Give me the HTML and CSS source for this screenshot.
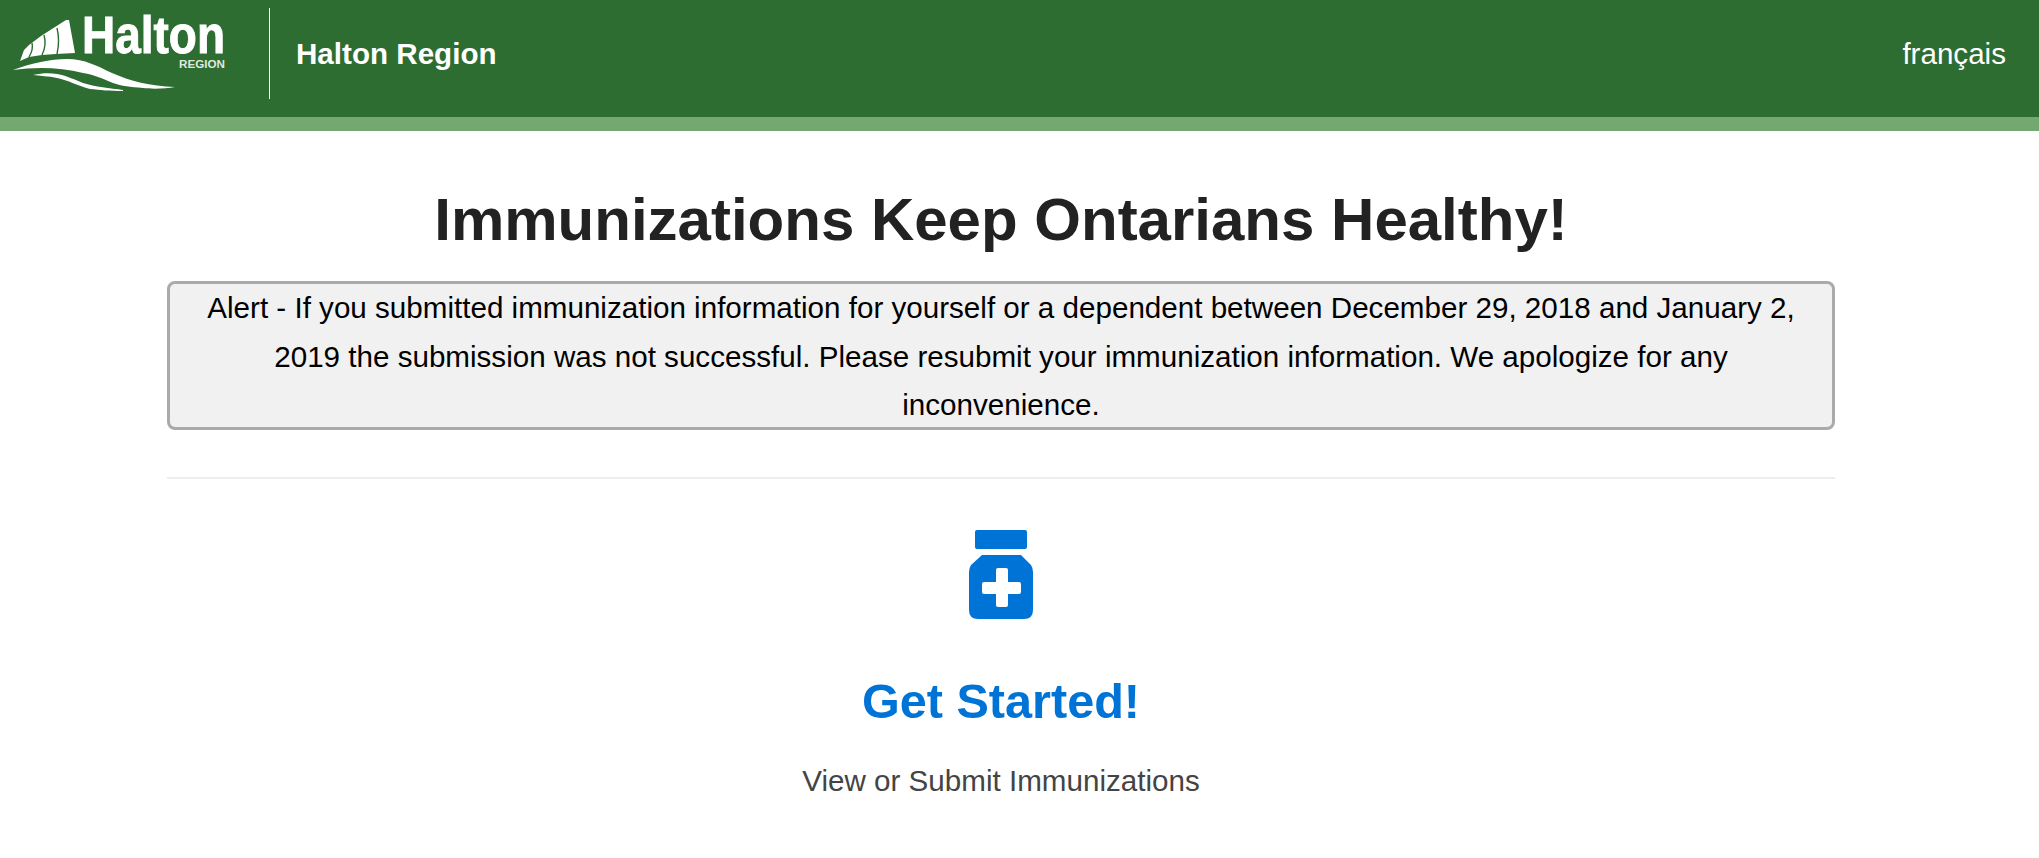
FILE: index.html
```html
<!DOCTYPE html>
<html lang="en">
<head>
<meta charset="utf-8">
<title>Immunizations Keep Ontarians Healthy!</title>
<link rel="stylesheet" href="styles.css">
</head>
<body>
<header class="site-header">
  <div class="brand">
    <svg class="logo" width="240" height="100" viewBox="0 0 240 100" role="img" aria-label="Halton Region">
      <path class="logo-fill" d="M66 20 L69 20 L75 53 L56 54 L42 55 L29 57 L20 61 L24 50 L29 45 L41 36 L55 27 Z"/>
      <path class="logo-slit" d="M57 28 C59 36 59 45 57 54 M44 35 C46 42 45 49 42 55 M32 43 C33 47 32 52 29 57"/>
      <path class="logo-fill" d="M13 70 C32 63 50 59 67 59 C85 59 97 66 112 73 C130 81 150 86 175 87 C165 89 150 89 143 88 C130 87 122 86 113 83 C103 79 95 75 83 73 C60 67 35 67 13 70 Z"/>
      <path class="logo-fill" d="M33 75 C42 73 50 73 57 74 C68 76 75 80 83 83 C95 87 110 88 123 90 L123 91 C110 91 100 90 90 89 C78 86 68 80 57 78 C48 76 40 76 33 75 Z"/>
      <text class="logo-name" x="82" y="53" textLength="143" lengthAdjust="spacingAndGlyphs">Halton</text>
      <text class="logo-sub" x="179" y="68" textLength="46" lengthAdjust="spacingAndGlyphs">REGION</text>
    </svg>
    <span class="divider"></span>
    <a class="brand-name" href="#">Halton Region</a>
  </div>
  <a class="lang" href="#">français</a>
</header>
<div class="band"></div>
<main class="content">
  <h1 class="title">Immunizations Keep Ontarians Healthy!</h1>
  <div class="alert">Alert - If you submitted immunization information for yourself or a dependent between December 29, 2018 and January 2, 2019 the submission was not successful. Please resubmit your immunization information. We apologize for any inconvenience.</div>
  <hr class="rule">
  <a class="start" href="#">
    <svg class="bottle" width="65" height="90" viewBox="0 0 65 90">
      <path class="bottle-fill" fill-rule="evenodd" d="M8 0 H56 Q58 0 58 2 V17 Q58 19 56 19 H8 Q6 19 6 17 V2 Q6 0 8 0 Z M13 25 H52 L62 35 Q64 38 64 42 V80 Q64 89 55 89 H9 Q0 89 0 80 V42 Q0 38 2 35 Z M29 38 Q27 38 27 40 V52 H15 Q13 52 13 54 V62 Q13 64 15 64 H27 V75 Q27 77 29 77 H37 Q39 77 39 75 V64 H50 Q52 64 52 62 V54 Q52 52 50 52 H39 V40 Q39 38 37 38 Z"/>
    </svg>
    <h2 class="start-title">Get Started!</h2>
    <p class="start-sub">View or Submit Immunizations</p>
  </a>
</main>
</body>
</html>
```
FILE: styles.css
```css
* { box-sizing: border-box; }
html, body { margin: 0; padding: 0; }
body { background: #fff; font-family: "Liberation Sans", Arial, sans-serif; }
a { text-decoration: none; }
.site-header {
  height: 117px;
  background: #2d6d32;
  display: flex;
  align-items: flex-start;
  justify-content: space-between;
  color: #fff;
}
.brand { display: flex; align-items: flex-start; }
.logo { display: block; flex: none; }
.logo-fill { fill: #fff; }
.logo-slit { fill: none; stroke: #2d6d32; stroke-width: 1.4; }
.logo-name { fill: #fff; stroke: #fff; stroke-width: 0.9; font: 700 51px "Liberation Sans", sans-serif; }
.logo-sub { fill: #dfe9df; font: 700 11.5px "Liberation Sans", sans-serif; }
.divider { width: 1px; height: 91px; margin: 8px 0 0 29px; background: #fff; }
.brand-name { margin: 38px 0 0 26px; color: #fff; font-size: 29.6px; line-height: 32px; font-weight: 700; }
.lang { margin: 38px 33px 0 0; color: #fff; font-size: 29.6px; line-height: 32px; }
.band { height: 14px; background: #73a971; }
.content { width: 1668px; margin: 0 0 0 167px; }
.title { margin: 53px 0 0; text-align: center; color: #222; font-size: 60px; line-height: 72px; font-weight: 700; }
.alert {
  margin-top: 25px;
  height: 149px;
  border: 3px solid #aaa;
  border-radius: 8px;
  background: #f1f1f1;
  padding: 0 30px;
  text-align: center;
  color: #000;
  font-size: 29.6px;
  line-height: 48.5px;
}
.rule { margin: 47px 0 0; border: 0; border-top: 2px solid #eee; }
.start { display: flex; flex-direction: column; align-items: center; padding-top: 51px; }
.bottle { display: block; }
.bottle-fill { fill: #0074d6; }
.start-title { margin: 52px 0 0; color: #0074d6; font-size: 48.6px; line-height: 58px; font-weight: 700; }
.start-sub { margin: 34px 0 0; color: #444; font-size: 29.6px; line-height: 34px; }
```
